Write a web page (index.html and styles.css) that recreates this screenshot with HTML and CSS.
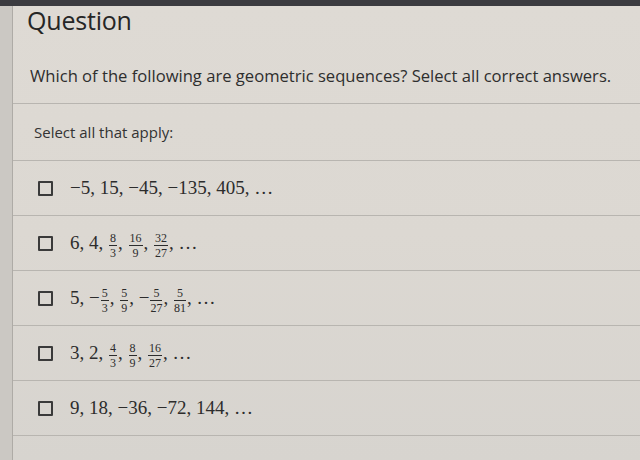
FILE: index.html
```html
<!DOCTYPE html>
<html>
<head>
<meta charset="utf-8">
<link rel="stylesheet" href="styles.css">
</head>
<body>
<div class="topbar"></div>
<div class="screen">
  <div class="strip"></div>
  <div class="card">
    <h1 class="title">Question</h1>
    <div class="row prompt">Which of the following are geometric sequences? Select all correct answers.</div>
    <div class="row select">Select all that apply:</div>
    <div class="row opt"><span class="box"></span><span class="math">−5, 15, −45, −135, 405, …</span></div>
    <div class="row opt"><span class="box"></span><span class="math">6, 4, <span class="fr"><span class="n">8</span><span class="d">3</span></span>, <span class="fr"><span class="n">16</span><span class="d">9</span></span>, <span class="fr"><span class="n">32</span><span class="d">27</span></span>, …</span></div>
    <div class="row opt"><span class="box"></span><span class="math">5, −<span class="fr"><span class="n">5</span><span class="d">3</span></span>, <span class="fr"><span class="n">5</span><span class="d">9</span></span>, −<span class="fr"><span class="n">5</span><span class="d">27</span></span>, <span class="fr"><span class="n">5</span><span class="d">81</span></span>, …</span></div>
    <div class="row opt"><span class="box"></span><span class="math">3, 2, <span class="fr"><span class="n">4</span><span class="d">3</span></span>, <span class="fr"><span class="n">8</span><span class="d">9</span></span>, <span class="fr"><span class="n">16</span><span class="d">27</span></span>, …</span></div>
    <div class="row opt last"><span class="box"></span><span class="math">9, 18, −36, −72, 144, …</span></div>
  </div>
</div>
</body>
</html>
```
FILE: styles.css
```css
html, body {
  margin: 0;
  padding: 0;
  height: 100%;
}
body {
  background: #d8d5d0;
  font-family: "Open Sans", "Noto Sans", sans-serif;
  color: #2a2a2a;
  overflow: hidden;
}
.topbar {
  height: 6px;
  background: #3b3b40;
}
.screen {
  display: flex;
  height: 454px;
}
.strip {
  width: 12px;
  flex: none;
  background: #cbc8c3;
  border-right: 1px solid #aeaba6;
}
.card {
  flex: 1;
  background: linear-gradient(180deg, #dedad4 0%, #dcd8d2 50%, #d7d4cf 100%);
}
.title {
  margin: 0;
  padding: 0 0 0 14px;
  height: 40px;
  box-sizing: border-box;
  font-size: 25px;
  font-weight: 400;
  line-height: 28px;
  letter-spacing: -0.2px;
  color: #262626;
}
.row {
  border-bottom: 1.5px solid #b8b5b0;
  box-sizing: border-box;
  display: flex;
  align-items: center;
}
.prompt {
  height: 58px;
  padding: 2px 0 0 17px;
  font-size: 16.6px;
  color: #2e2e2e;
}
.select {
  height: 57px;
  padding: 0 0 0 21px;
  font-size: 15px;
  color: #333;
}
.opt {
  height: 55px;
  padding: 0 0 0 25px;
}
.box {
  width: 11px;
  height: 11px;
  border: 2px solid #3a3a3a;
  border-radius: 1px;
  flex: none;
  margin-right: 17px;
}
.math {
  font-family: "Liberation Serif", "Times New Roman", serif;
  font-size: 19px;
  color: #2c2c2c;
  display: inline-flex;
  align-items: center;
  white-space: pre;
}
.fr {
  display: inline-flex;
  flex-direction: column;
  align-items: center;
  font-family: "Liberation Serif", serif;
  font-size: 12px;
  line-height: 12px;
  margin: 0 1px;
  position: relative;
  top: 2px;
}
.fr .n {
  border-bottom: 1px solid #2c2c2c;
  padding: 0 1px 1px;
  align-self: stretch;
  text-align: center;
}
.fr .d {
  padding-top: 1px;
}
```
